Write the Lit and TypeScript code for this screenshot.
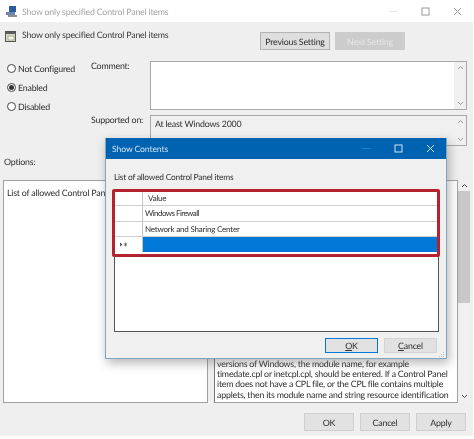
import { LitElement, html, css } from "lit";
import { customElement } from "lit/decorators.js";

@customElement("app-root")
export class AppRoot extends LitElement {
  static styles = css`
    :host { display: block; width: 474px; height: 439px; position: relative; overflow: hidden; background: #fff;
      font-family: "Lato", "Open Sans", sans-serif; font-size: 8.8px; letter-spacing: -0.2px; color: #2e2e2e; text-rendering: geometricPrecision; filter: blur(0.3px); }
    * { box-sizing: border-box; }
    .titlebar { height: 22px; display: flex; align-items: center; padding-left: 6px; gap: 4px; color: #a4a4a4; }
    .titlebar .t { flex: 1; }
    .caps { display: flex; align-items: center; gap: 23px; padding-right: 12px; }
    .body { height: 414px; width: 473px; background: #efefef; padding: 4px 3px 0 3px; display: flex; flex-direction: column; }
    .head { display: flex; align-items: flex-start; height: 31px; }
    .head .ico { margin: 5px 6px 0 2px; }
    .head .t { flex: 1; margin-top: 3px; color: #3a3a3a; }
    .btn { width: 70px; height: 18px; background: #dedede; border: 1px solid #b4b4b4; display: flex; align-items: center; justify-content: center; }
    .navs { display: flex; gap: 5px; margin: 6px 65px 0 0; }
    .btn.off { background: #cccccc; border-color: #cccccc; color: #e6e6e6; }
    .mid { display: grid; grid-template-columns: 87px 60px 317px; height: 98px; }
    .radios { display: flex; flex-direction: column; gap: 7px; padding: 5px 0 0 4px; }
    .radio { display: flex; align-items: center; gap: 2px; height: 12px; white-space: nowrap; }
    .dot { width: 9px; height: 9px; border: 1px solid #444; border-radius: 50%; background: #fff; display: flex; align-items: center; justify-content: center; }
    .dot i { width: 5px; height: 5px; border-radius: 50%; background: #333; }
    .labels { display: flex; flex-direction: column; padding: 3px 0 0 1px; }
    .labels span:first-child { height: 54px; }
    .boxes { display: flex; flex-direction: column; gap: 5px; padding-top: 4px; }
    .box { border: 1px solid #a8a8a8; position: relative; display: flex; }
    .box .in { flex: 1; padding: 2px 4px; }
    .comment { height: 49px; background: #fff; }
    .support { height: 31px; background: #f0f0f0; }
    .sb { width: 12px; display: flex; flex-direction: column; align-items: center; justify-content: space-between; padding: 3px 0; background: #f0f0f0; color: #9a9a9a; }
    .optlabel { height: 25px; padding: 1px 0 0 1px; }
    .opts { display: flex; height: 223px; }
    .pane { border: 1px solid #a0a0a0; background: #fff; }
    .left { width: 205px; padding: 6px 3px; white-space: nowrap; overflow: hidden; margin-right: 6px; }
    .right { width: 244px; padding: 0 2px 2px 2px; display: flex; flex-direction: column; justify-content: flex-end; line-height: 10.3px; overflow: hidden; white-space: nowrap; border-left-color: #777; }
    .vsb { width: 12px; background: #f0f0f0; position: relative; display: flex; flex-direction: column; align-items: center; }
    .up { height: 11px; display: flex; align-items: center; color: #444; }
    .thumb { width: 12px; height: 112px; background: #c8c8c8; }
    .down { margin-top: auto; height: 12px; margin-bottom: 1px; display: flex; align-items: center; color: #444; }
    .foot { display: flex; justify-content: flex-end; gap: 6px; padding: 10px 4px 0 0; }
    .foot .btn { width: 50px; height: 18px; background: #e2e2e2; border-color: #cfcfcf; }
    .dialog { position: absolute; left: 105px; top: 138px; width: 342px; height: 221px; background: #f0f0f0; border: 1px solid #7ea6bf; border-top: 0;
      box-shadow: 2px 4px 10px rgba(90, 90, 90, 0.45); display: flex; flex-direction: column; }
    .dtitle { height: 21px; background: #0063b1; color: #cfe3f3; display: flex; align-items: center; padding-left: 6px; flex: none; letter-spacing: -0.1px; font-size: 8.6px; }
    .dtitle .t { flex: 1; }
    .dtitle .caps { padding-right: 11px; }
    .dbody { flex: 1; display: flex; flex-direction: column; padding: 0 7px 0 8px; position: relative; }
    .dlabel { height: 31px; padding-top: 12px; line-height: 12px; font-size: 8.4px; letter-spacing: -0.22px; }
    .grid { height: 142px; flex: none; border: 1px solid #555; background: #fff; display: grid; grid-template-columns: 28px 1fr; grid-template-rows: 15px 16px 15px 15px 1fr; }
    .c { border-bottom: 1px solid #d0d0d0; background: #fff; padding-left: 2px; line-height: 15px; white-space: nowrap; font-size: 8px; letter-spacing: -0.2px; }
    .c.tight { letter-spacing: -0.55px; }
    .c.rh { border-right: 1px solid #c4c4c4; }
    .c.hd { padding-left: 5px; }
    .c.sel { background: #0078d7; border: 0; }
    .c.mark { border-bottom: 0; display: flex; align-items: center; padding-left: 5px; }
    .empty { background: #fff; }
    .frame { position: absolute; left: 6px; top: 30px; width: 328px; height: 68px; border: 3px solid #b4222f; border-radius: 2px; pointer-events: none; }
    .dfoot { display: flex; justify-content: flex-end; gap: 6px; padding: 6px 2px 0 0; }
    .dfoot .btn { width: 53px; height: 15px; background: #e1e1e1; border-color: #d4d4d4; }
    .dfoot .btn.def { border: 1px solid #0078d7; }
    u { text-decoration-thickness: 0.6px; text-underline-offset: 1px; }
    .grip { position: absolute; right: 1px; bottom: 1px; }
  `;

  private chevron(up: boolean) {
    return html`<svg width="7" height="5" viewBox="0 0 7 5"><path d="${up ? "M1 4 L3.5 1.5 L6 4" : "M1 1 L3.5 3.5 L6 1"}" fill="none" stroke="currentColor" stroke-width="1"/></svg>`;
  }

  private caps(color: string, lineColor: string) {
    return html`<div class="caps">
      <svg width="9" height="9" viewBox="0 0 9 9"><path d="M0 4.5H9" stroke="${lineColor}" stroke-width="1"/></svg>
      <svg width="9" height="9" viewBox="0 0 9 9"><rect x="1" y="1" width="7" height="7" fill="none" stroke="${color}" stroke-width="1"/></svg>
      <svg width="9" height="9" viewBox="0 0 9 9"><path d="M1 1L8 8M8 1L1 8" stroke="${color}" stroke-width="1"/></svg>
    </div>`;
  }

  render() {
    return html`
      <div class="titlebar">
        <svg width="12" height="11" viewBox="0 0 12 11">
          <rect x="3" y="0" width="7" height="6" fill="#2b5c9e"/>
          <rect x="0" y="6" width="9" height="3" fill="#6d86ad"/>
          <rect x="2" y="9" width="9" height="2" fill="#8d8d8d"/>
        </svg>
        <span class="t">Show only specified Control Panel items</span>
        ${this.caps("#9a9a9a", "#e6e6e6")}
      </div>
      <div class="body">
        <div class="head">
          <svg class="ico" width="11" height="11" viewBox="0 0 11 11">
            <rect x="0.5" y="0.5" width="10" height="10" fill="#d8dcc8" stroke="#555"/>
            <rect x="1" y="1" width="9" height="2" fill="#5c5c5c"/>
            <rect x="3" y="5" width="6" height="4" fill="#f4f4ea" stroke="#8a8a70" stroke-width="0.6"/>
          </svg>
          <span class="t">Show only specified Control Panel items</span>
          <div class="navs">
            <div class="btn">Previous Setting</div>
            <div class="btn off">Next Setting</div>
          </div>
        </div>
        <div class="mid">
          <div class="radios">
            <div class="radio"><span class="dot"></span>Not Configured</div>
            <div class="radio"><span class="dot"><i></i></span>Enabled</div>
            <div class="radio"><span class="dot"></span>Disabled</div>
          </div>
          <div class="labels"><span>Comment:</span><span>Supported on:</span></div>
          <div class="boxes">
            <div class="box comment"><div class="in"></div><div class="sb">${this.chevron(true)}${this.chevron(false)}</div></div>
            <div class="box support"><div class="in">At least Windows 2000</div><div class="sb">${this.chevron(true)}${this.chevron(false)}</div></div>
          </div>
        </div>
        <div class="optlabel">Options:</div>
        <div class="opts">
          <div class="pane left">List of allowed Control Panel items</div>
          <div class="pane right">
            <div>versions of Windows, the module name, for example</div>
            <div>timedate.cpl or inetcpl.cpl, should be entered. If a Control Panel</div>
            <div>item does not have a CPL file, or the CPL file contains multiple</div>
            <div>applets, then its module name and string resource identification</div>
          </div>
          <div class="vsb">
            <div class="up">${this.chevron(true)}</div>
            <div class="thumb"></div>
            <div class="down">${this.chevron(false)}</div>
          </div>
        </div>
        <div class="foot">
          <div class="btn">OK</div>
          <div class="btn">Cancel</div>
          <div class="btn">Apply</div>
        </div>
      </div>
      <div class="dialog">
        <div class="dtitle">
          <span class="t">Show Contents</span>
          ${this.caps("#cfe6f7", "#2a7cc0")}
        </div>
        <div class="dbody">
          <div class="dlabel">List of allowed Control Panel items</div>
          <div class="grid">
            <div class="c rh"></div><div class="c hd">Value</div>
            <div class="c rh"></div><div class="c tight">Windows Firewall</div>
            <div class="c rh"></div><div class="c">Network and Sharing Center</div>
            <div class="c rh mark">
              <svg width="8" height="5" viewBox="0 0 8 5"><path d="M0 0.5L2.5 2.5L0 4.5Z" fill="#555"/><path d="M5.5 0.5V4.5M3.8 1.5L7.2 3.5M7.2 1.5L3.8 3.5" stroke="#555" stroke-width="0.7"/></svg>
            </div><div class="c sel"></div>
            <div class="empty"></div><div class="empty"></div>
          </div>
          <div class="frame"></div>
          <div class="dfoot">
            <div class="btn def"><span><u>O</u>K</span></div>
            <div class="btn"><span><u>C</u>ancel</span></div>
          </div>
          <svg class="grip" width="6" height="6" viewBox="0 0 6 6"><path d="M5 1V2H4V1ZM5 3V4H4V3ZM3 3V4H2V3ZM5 5V6H4V5ZM3 5V6H2V5ZM1 5V6H0V5Z" fill="#b9c2c9"/></svg>
        </div>
      </div>
    `;
  }
}
